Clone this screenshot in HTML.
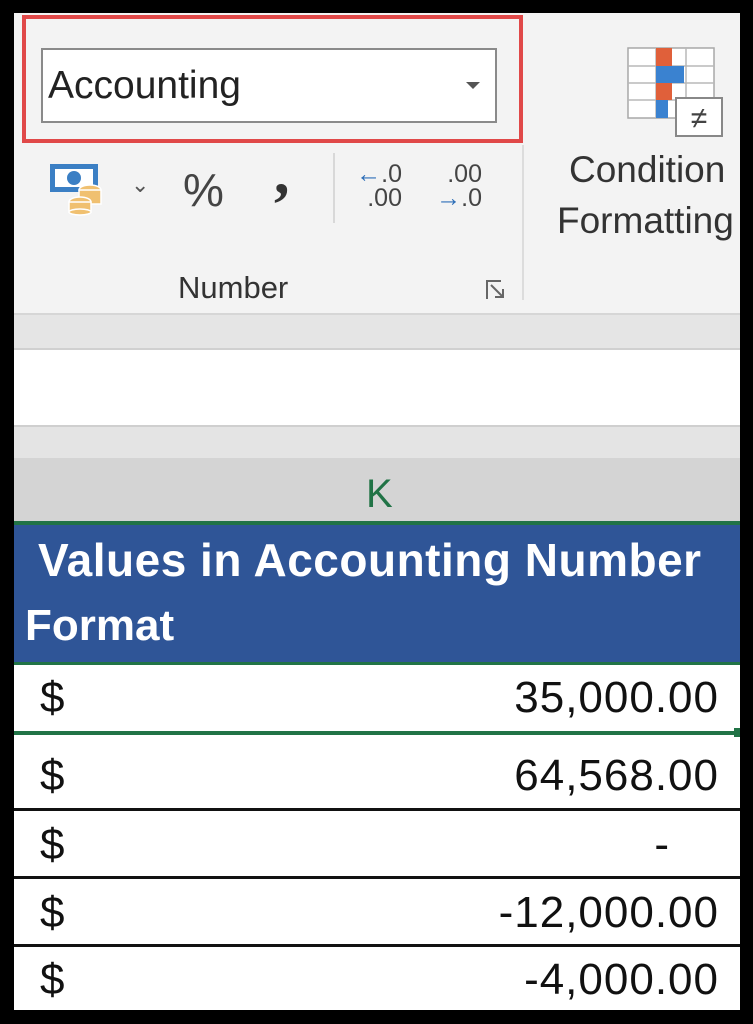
<!DOCTYPE html>
<html><head><meta charset="utf-8"><style>
*{margin:0;padding:0;box-sizing:border-box}
body{width:753px;height:1024px;background:#000;position:relative;overflow:hidden;font-family:"Liberation Sans",sans-serif}
.a{position:absolute}
</style></head><body>
<!-- ribbon -->
<div class="a" style="left:14px;top:13px;width:726px;height:300px;background:#f3f3f3;overflow:hidden">
<div class="a" style="left:555px;top:136px;font-size:37px;color:#333;white-space:nowrap">Condition</div>
<div class="a" style="left:543px;top:187px;font-size:37px;color:#333;white-space:nowrap">Formatting</div>
</div>
<div class="a" style="left:22px;top:15px;width:501px;height:128px;border:4px solid #e04848"></div>
<div class="a" style="left:41px;top:48px;width:456px;height:75px;background:#fff;border:2px solid #8a8a8a"></div>
<div class="a" style="left:48px;top:64px;font-size:39px;color:#222;line-height:44px">Accounting</div>
<div class="a" style="left:466px;top:82px;width:0;height:0;border-left:7px solid transparent;border-right:7px solid transparent;border-top:7px solid #555"></div>
<div class="a" style="left:522px;top:145px;width:2px;height:155px;background:#dcdcdc"></div>
<div class="a" style="left:333px;top:153px;width:2px;height:70px;background:#d8d8d8"></div>
<!-- currency icon -->
<svg class="a" style="left:48px;top:162px" width="56" height="54" viewBox="0 0 56 54">
<rect x="2" y="2" width="48" height="28" fill="#3b7fc4"/>
<rect x="7" y="7" width="38" height="18" fill="#fff"/>
<circle cx="26" cy="16" r="7" fill="#3b7fc4"/>
<g fill="#f0c070" stroke="#fff" stroke-width="1.5">
<ellipse cx="42" cy="28" rx="11" ry="5"/><rect x="31" y="28" width="22" height="14"/>
<ellipse cx="32" cy="40" rx="11" ry="5"/><rect x="21" y="40" width="22" height="10"/><ellipse cx="32" cy="50" rx="11" ry="3"/>
</g></svg>
<div class="a" style="left:131px;top:172px;font-size:22px;color:#555">&#8964;</div>
<div class="a" style="left:183px;top:163px;font-size:46px;color:#444">%</div>
<div class="a" style="left:274px;top:138px;font-size:62px;color:#333;font-weight:bold;font-family:'Liberation Serif',serif">,</div>
<div class="a" style="left:354px;top:162px;font-size:25px;color:#444;line-height:24px;text-align:right;width:48px"><span style="color:#2f6fb8;font-weight:bold">&#8592;</span>.0<br>.00</div>
<div class="a" style="left:434px;top:162px;font-size:25px;color:#444;line-height:24px;text-align:right;width:48px">.00<br><span style="color:#2f6fb8;font-weight:bold">&#8594;</span>.0</div>
<!-- conditional formatting icon -->
<svg class="a" style="left:626px;top:46px" width="100" height="92" viewBox="0 0 100 92">
<g stroke="#a8a8a8" fill="#fff" stroke-width="1.5">
<rect x="2" y="2" width="86" height="70"/></g>
<g stroke="#b8b8b8" stroke-width="1.5"><line x1="2" y1="20" x2="88" y2="20"/><line x1="2" y1="37" x2="88" y2="37"/><line x1="2" y1="54" x2="88" y2="54"/><line x1="30" y1="2" x2="30" y2="72"/><line x1="60" y1="2" x2="60" y2="72"/></g>
<rect x="30" y="2" width="16" height="18" fill="#e0603a"/>
<rect x="30" y="20" width="28" height="17" fill="#3a82d0"/>
<rect x="30" y="37" width="16" height="17" fill="#e0603a"/>
<rect x="30" y="54" width="12" height="18" fill="#3a82d0"/>
<rect x="50" y="52" width="46" height="38" fill="#fff" stroke="#888" stroke-width="2"/>
<text x="73" y="82" font-size="30" text-anchor="middle" fill="#444" font-family="Liberation Sans">&#8800;</text>
</svg>
<div class="a" style="left:178px;top:270px;font-size:31px;color:#333">Number</div>
<svg class="a" style="left:485px;top:279px" width="26" height="22" viewBox="0 0 26 22"><path d="M2 20V2h14M6 6l12 12M18 10v8h-8" stroke="#666" stroke-width="2" fill="none"/></svg>
<!-- bands -->
<div class="a" style="left:14px;top:313px;width:726px;height:35px;background:#e5e5e5;border-top:2px solid #d6d6d6"></div>
<div class="a" style="left:14px;top:348px;width:726px;height:77px;background:#fff;border-top:2px solid #d0d0d0"></div>
<div class="a" style="left:14px;top:425px;width:726px;height:33px;background:#e4e4e4;border-top:2px solid #cfcfcf"></div>
<div class="a" style="left:14px;top:458px;width:726px;height:64px;background:#d4d4d4"></div>
<div class="a" style="left:366px;top:472px;font-size:40px;color:#217346">K</div>
<div class="a" style="left:14px;top:521px;width:726px;height:4px;background:#217346"></div>
<!-- table -->
<div class="a" style="left:14px;top:525px;width:726px;height:137px;background:#2f5597"></div>
<div class="a" style="left:38px;top:533px;font-size:46px;font-weight:bold;color:#fff;white-space:nowrap;letter-spacing:0.5px">Values in Accounting Number</div>
<div class="a" style="left:25px;top:601px;font-size:44px;font-weight:bold;color:#fff">Format</div>
<div class="a" style="left:14px;top:662px;width:726px;height:348px;background:#fff"></div>
<div class="a" style="left:14px;top:662px;width:726px;height:3px;background:#217346"></div>
<div class="a" style="left:14px;top:731px;width:724px;height:4px;background:#217346"></div>
<div class="a" style="left:734px;top:728px;width:6px;height:9px;background:#217346"></div>
<div class="a" style="left:14px;top:808px;width:726px;height:3px;background:#111"></div>
<div class="a" style="left:14px;top:876px;width:726px;height:3px;background:#111"></div>
<div class="a" style="left:14px;top:944px;width:726px;height:3px;background:#111"></div>
<div class="a" style="left:14px;top:665px;width:726px;font-size:44px;color:#111">
<div style="position:absolute;top:8px;left:26px">$</div><div style="position:absolute;top:8px;right:21px;letter-spacing:1px">35,000.00</div>
<div style="position:absolute;top:86px;left:26px">$</div><div style="position:absolute;top:86px;right:21px;letter-spacing:1px">64,568.00</div>
<div style="position:absolute;top:155px;left:26px">$</div><div style="position:absolute;top:155px;right:71px">-</div>
<div style="position:absolute;top:223px;left:26px">$</div><div style="position:absolute;top:223px;right:21px;letter-spacing:1px">-12,000.00</div>
<div style="position:absolute;top:290px;left:26px">$</div><div style="position:absolute;top:290px;right:21px;letter-spacing:1px">-4,000.00</div>
</div>
</body></html>
